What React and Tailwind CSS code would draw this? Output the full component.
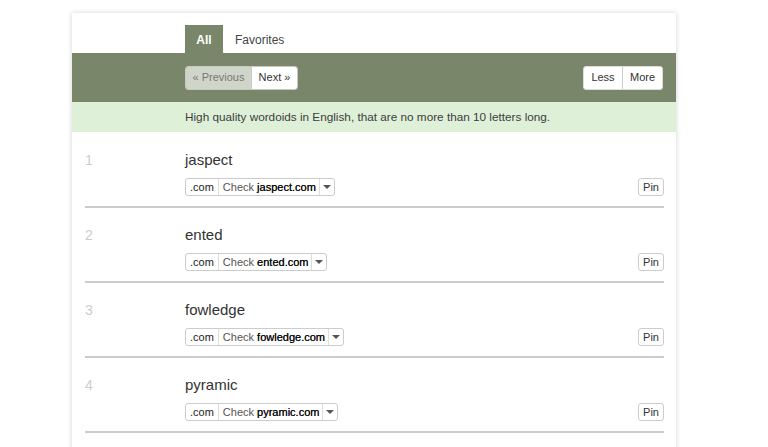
import React from 'react';

const words = ['jaspect', 'ented', 'fowledge', 'pyramic'];

const Caret = () => (
  <span className="inline-block w-0 h-0 border-l-[4px] border-r-[4px] border-t-[4px] border-l-transparent border-r-transparent border-t-[#555]"></span>
);

const WordRow = ({ n, word }) => (
  <div className="flex border-b-2 border-[#cccccc] pt-[17px] pb-[10px]">
    <div className="w-[100px] h-[20px] flex items-center text-[14px] text-[#cccccc]">{n}</div>
    <div className="flex-1">
      <div className="h-[20px] flex items-center text-[15px] text-[#333]">{word}</div>
      <div className="mt-[8px] flex justify-between items-center">
        <div className="flex h-[18px] border border-[#ccc] rounded-[3px] text-[11px] text-[#444] bg-white">
          <span className="px-[4px] flex items-center text-[#222]">.com</span>
          <span className="pl-[4px] pr-[3px] flex items-center border-l border-[#ddd] text-[#555]">
            Check&nbsp;<span className="text-[#111] [text-shadow:0_0_0.4px_#111]">{word}.com</span>
          </span>
          <span className="w-[15px] flex items-center justify-center border-l border-[#ddd]"><Caret /></span>
        </div>
        <div className="h-[18px] px-[4px] flex items-center border border-[#ccc] rounded-[3px] text-[11px] text-[#333]">Pin</div>
      </div>
    </div>
  </div>
);

export default function App() {
  return (
    <div className="min-h-screen bg-white pt-[13px]" style={{ fontFamily: '"Liberation Sans", Arial, sans-serif' }}>
      <div className="ml-[72px] w-[604px] bg-white shadow-[0_0_5px_rgba(0,0,0,0.18)] pb-[40px]">
        {/* tabs */}
        <div className="h-[40px] flex items-end pl-[113px] text-[12px]">
          <div className="h-[28px] w-[38px] flex items-center justify-center pt-[1px] bg-[#7a866a] text-white font-bold">All</div>
          <div className="h-[28px] px-[12px] flex items-center pt-[1px] text-[#444]">Favorites</div>
        </div>
        {/* nav bar */}
        <div className="h-[49px] bg-[#7a866a] flex items-center justify-between pl-[113px] pr-[13px]">
          <div className="flex h-[24px] rounded-[3px] overflow-hidden border border-[#c6cbbf] text-[11px]">
            <span className="w-[65px] flex items-center justify-center bg-[#d0d5c9] text-[#777]">« Previous</span>
            <span className="w-[46px] flex items-center justify-center bg-white text-[#333] border-l border-[#ccc]">Next »</span>
          </div>
          <div className="flex h-[24px] rounded-[3px] overflow-hidden border border-[#ddd] text-[11px] bg-white text-[#333]">
            <span className="w-[38px] flex items-center justify-center">Less</span>
            <span className="w-[40px] flex items-center justify-center border-l border-[#ccc]">More</span>
          </div>
        </div>
        {/* info */}
        <div className="h-[30px] bg-[#dff0d8] flex items-center pl-[113px] text-[11.75px] text-[#3c3c3c]">
          High quality wordoids in English, that are no more than 10 letters long.
        </div>
        {/* rows */}
        <div className="pl-[13px] pr-[12px] pt-[1px]">
          {words.map((w, i) => (
            <WordRow key={w} n={i + 1} word={w} />
          ))}
        </div>
      </div>
    </div>
  );
}
